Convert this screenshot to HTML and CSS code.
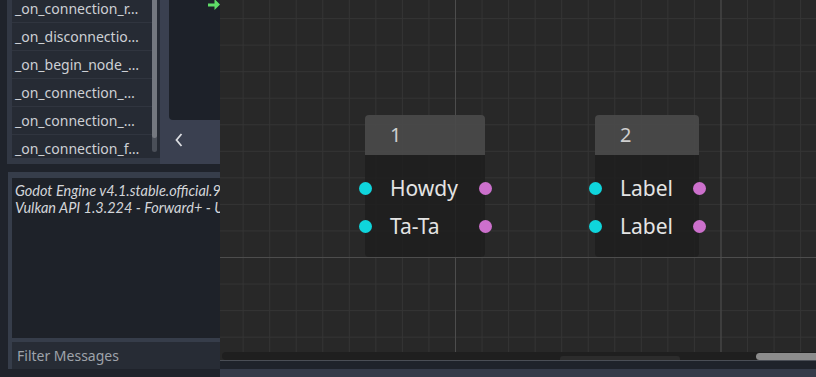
FILE: index.html
```html
<!DOCTYPE html>
<html>
<head>
<meta charset="utf-8">
<link rel="stylesheet" href="styles.css">
</head>
<body>
<div class="app">
  <div class="left">
    <div class="top">
      <div class="tree-panel">
        <div class="list">
          <div class="items">
            <div class="item">_on_connection_r…</div>
            <div class="item">_on_disconnectio…</div>
            <div class="item">_on_begin_node_…</div>
            <div class="item">_on_connection_…</div>
            <div class="item">_on_connection_…</div>
            <div class="item">_on_connection_f…</div>
          </div>
          <div class="vscroll"><div class="vgrab"></div></div>
        </div>
      </div>
      <div class="script-panel">
        <div class="code">
          <svg class="exec-arrow" width="12" height="12" viewBox="0 0 12 12"><path d="M0 4.5h6.5V0L12 5.5 6.5 11V7.5H0z" fill="#5fdd68"/></svg>
        </div>
        <div class="chev-row">
          <svg class="chev" width="8" height="14" viewBox="0 0 8 14"><path d="M6.5 1 1.5 7l5 6" fill="none" stroke="#dcdee2" stroke-width="1.8"/></svg>
        </div>
      </div>
    </div>
    <div class="output">
      <div class="log">
        <p>Godot Engine v4.1.stable.official.970459615 - https://godotengine.org</p>
        <p>Vulkan API 1.3.224 - Forward+ - Using Vulkan Device #0</p>
      </div>
      <div class="filter">Filter Messages</div>
    </div>
  </div>
  <div class="right">
    <div class="graph">
      <div class="node node-1">
        <div class="node-title">1</div>
        <div class="node-body">
          <div class="slot">Howdy</div>
          <div class="slot">Ta-Ta</div>
        </div>
      </div>
      <div class="node node-2">
        <div class="node-title">2</div>
        <div class="node-body">
          <div class="slot">Label</div>
          <div class="slot">Label</div>
        </div>
      </div>
      <div class="hscroll">
        <div class="hint"></div>
        <div class="hgrab"></div>
      </div>
    </div>
    <div class="below"></div>
  </div>
</div>
</body>
</html>
```

FILE: styles.css
```css
html, body {
  margin: 0;
  padding: 0;
}
body {
  width: 816px;
  height: 377px;
  overflow: hidden;
  background: #1f232b;
  font-family: "Noto Sans", "Open Sans", sans-serif;
}
.app {
  display: flex;
  width: 816px;
  height: 377px;
}
.left {
  width: 220px;
  flex: none;
  display: flex;
  flex-direction: column;
  overflow: hidden;
  background: #1f232b;
}
.top {
  height: 164px;
  flex: none;
  display: flex;
  padding-left: 7px;
}
.tree-panel {
  width: 153px;
  flex: none;
  box-sizing: border-box;
  background: #323844;
  padding: 0 0 6px 5px;
  display: flex;
}
.list {
  flex: 1;
  background: #262b34;
  display: flex;
  overflow: hidden;
}
.items {
  width: 140px;
  flex: none;
  margin-top: -5px;
}
.item {
  height: 27px;
  border-bottom: 1px solid #30353f;
  padding-left: 3px;
  font-size: 14px;
  line-height: 27px;
  color: #cdd0d4;
  white-space: nowrap;
  overflow: hidden;
}
.vscroll {
  width: 5px;
  height: 152px;
  flex: none;
  background: #4a4f58;
  border-radius: 0 0 3px 3px;
}
.vgrab {
  height: 138px;
  background: #74787f;
  border-radius: 0 0 3px 3px;
}
.script-panel {
  flex: 1;
  background: #3a4050;
  display: flex;
  flex-direction: column;
}
.code {
  height: 120px;
  flex: none;
  margin-left: 9px;
  background: #1d2129;
  border-bottom-left-radius: 4px;
  display: flex;
  justify-content: flex-end;
  align-items: flex-start;
}
.exec-arrow {
  margin-top: -1px;
}
.chev-row {
  flex: 1;
  padding: 13px 0 0 15px;
}
.chev {
  display: block;
}
.output {
  margin: 8px 0 8px 8px;
  height: 197px;
  flex: none;
  box-sizing: border-box;
  background: #363d4a;
  padding: 6px 0 0 4px;
  display: flex;
  flex-direction: column;
  gap: 4px;
}
.log {
  height: 160px;
  flex: none;
  box-sizing: border-box;
  background: #1e2229;
  padding: 4px 0 0 3px;
  white-space: nowrap;
  font-family: "Lato", "Open Sans", sans-serif;
  font-style: italic;
  font-size: 14.5px;
  color: #d3d5d9;
}
.log p {
  margin: 0;
  line-height: 17px;
}
.filter {
  height: 27px;
  flex: none;
  background: #272c35;
  padding-left: 5px;
  font-size: 14px;
  line-height: 27px;
  color: #9ea3aa;
}
.right {
  width: 596px;
  flex: none;
  display: flex;
  flex-direction: column;
  background: #353b49;
}
.graph {
  height: 361px;
  flex: none;
  box-sizing: border-box;
  border-bottom: 1px solid #4a4e56;
  position: relative;
  overflow: hidden;
  background-color: #282828;
  background-image:
    linear-gradient(90deg, #4d4d4d 1px, transparent 1px),
    linear-gradient(180deg, #4d4d4d 1px, transparent 1px),
    linear-gradient(90deg, #343434 1px, transparent 1px),
    linear-gradient(180deg, #343434 1px, transparent 1px);
  background-size: 265.5px 100%, 100% 265.5px, 26.55px 100%, 100% 26.55px;
  background-position: 235px 0, 0 257px, 235px 0, 0 257px;
}
.below {
  height: 8px;
  flex: none;
  background: #1f232b;
}
.node {
  position: absolute;
  top: 115px;
}
.node-1 {
  left: 145px;
  width: 120px;
}
.node-2 {
  left: 375px;
  width: 104px;
}
.node-title {
  height: 40px;
  box-sizing: border-box;
  background: rgba(74, 74, 74, 0.92);
  border-radius: 4px 4px 0 0;
  padding-left: 25px;
  font-size: 20px;
  line-height: 40px;
  color: #cfcfcf;
}
.node-body {
  height: 102px;
  box-sizing: border-box;
  background: rgba(30, 30, 30, 0.86);
  border-radius: 0 0 4px 4px;
  padding-top: 14px;
}
.slot {
  position: relative;
  height: 38px;
  padding-left: 25px;
  font-size: 21px;
  line-height: 38px;
  color: #e4e4e4;
}
.slot::before,
.slot::after {
  content: "";
  position: absolute;
  top: 12.5px;
  width: 13px;
  height: 13px;
  border-radius: 50%;
}
.slot::before {
  left: -6.5px;
  background: #0fd5dc;
}
.slot::after {
  right: -6.5px;
  background: #cc70cc;
}
.hscroll {
  position: absolute;
  left: 2px;
  right: 0;
  bottom: 0;
  height: 8px;
  background: #1f1f1f;
  border-radius: 4px 0 0 4px;
}
.hint {
  position: absolute;
  left: 338px;
  width: 120px;
  top: 4px;
  height: 4px;
  background: #2c2c2c;
  border-radius: 3px 3px 0 0;
}
.hgrab {
  position: absolute;
  left: 534px;
  right: -6px;
  top: 1px;
  height: 7px;
  background: #8c8c8c;
  border-radius: 4px;
}
```
